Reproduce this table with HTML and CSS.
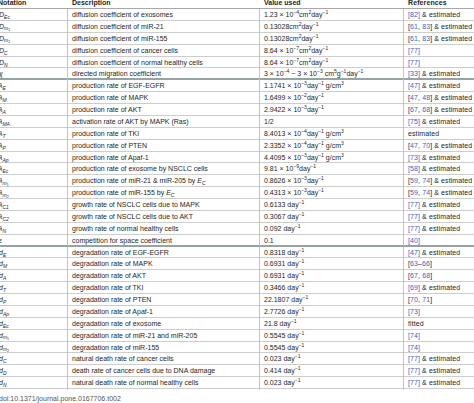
FILE: index.html
```html
<!DOCTYPE html>
<html>
<head>
<meta charset="utf-8">
<link rel="stylesheet" href="styles.css">
</head>
<body>
<div class="tbl">
  <div class="row head"><div class="cell">Notation</div><div class="cell">Description</div><div class="cell">Value used</div><div class="cell">References</div></div>

  <div class="row"><div class="cell n"><i>D</i><sub>Ec</sub></div><div class="cell">diffusion coefficient of exosomes</div><div class="cell">1.23 × 10<sup>−4</sup>cm<sup>2</sup>day<sup>−1</sup></div><div class="cell"><a>[82]</a> &amp; estimated</div></div>
  <div class="row"><div class="cell n"><i>D</i><sub>m<sub>1</sub></sub></div><div class="cell">diffusion coefficient of miR-21</div><div class="cell">0.13028cm<sup>2</sup>day<sup>−1</sup></div><div class="cell">[<a>61</a>, <a>83</a>] &amp; estimated</div></div>
  <div class="row"><div class="cell n"><i>D</i><sub>m<sub>2</sub></sub></div><div class="cell">diffusion coefficient of miR-155</div><div class="cell">0.13028cm<sup>2</sup>day<sup>−1</sup></div><div class="cell">[<a>61</a>, <a>83</a>] &amp; estimated</div></div>
  <div class="row"><div class="cell n"><i>D</i><sub>C</sub></div><div class="cell">diffusion coefficient of cancer cells</div><div class="cell">8.64 × 10<sup>−7</sup>cm<sup>2</sup>day<sup>−1</sup></div><div class="cell"><a>[77]</a></div></div>
  <div class="row"><div class="cell n"><i>D</i><sub>N</sub></div><div class="cell">diffusion coefficient of normal healthy cells</div><div class="cell">8.64 × 10<sup>−7</sup>cm<sup>2</sup>day<sup>−1</sup></div><div class="cell"><a>[77]</a></div></div>
  <div class="row thick"><div class="cell n"><i>χ</i></div><div class="cell">directed migration coefficient</div><div class="cell">3 × 10<sup>−4</sup> − 3 × 10<sup>−3</sup> cm<sup>5</sup>g<sup>−1</sup>day<sup>−1</sup></div><div class="cell"><a>[33]</a> &amp; estimated</div></div>

  <div class="row"><div class="cell n"><i>λ</i><sub>E</sub></div><div class="cell">production rate of EGF-EGFR</div><div class="cell">1.1741 × 10<sup>−3</sup>day<sup>−1</sup> g/cm<sup>3</sup></div><div class="cell"><a>[47]</a> &amp; estimated</div></div>
  <div class="row"><div class="cell n"><i>λ</i><sub>M</sub></div><div class="cell">production rate of MAPK</div><div class="cell">1.6499 × 10<sup>−2</sup>day<sup>−1</sup></div><div class="cell">[<a>47</a>, <a>48</a>] &amp; estimated</div></div>
  <div class="row"><div class="cell n"><i>λ</i><sub>A</sub></div><div class="cell">production rate of AKT</div><div class="cell">2.9422 × 10<sup>−3</sup>day<sup>−1</sup></div><div class="cell">[<a>67</a>, <a>68</a>] &amp; estimated</div></div>
  <div class="row"><div class="cell n"><i>λ</i><sub>MA</sub></div><div class="cell">activation rate of AKT by MAPK (Ras)</div><div class="cell">1/2</div><div class="cell"><a>[75]</a> &amp; estimated</div></div>
  <div class="row"><div class="cell n"><i>λ</i><sub>T</sub></div><div class="cell">production rate of TKI</div><div class="cell">8.4013 × 10<sup>−4</sup>day<sup>−1</sup> g/cm<sup>3</sup></div><div class="cell">estimated</div></div>
  <div class="row"><div class="cell n"><i>λ</i><sub>P</sub></div><div class="cell">production rate of PTEN</div><div class="cell">2.3352 × 10<sup>−4</sup>day<sup>−1</sup> g/cm<sup>3</sup></div><div class="cell">[<a>47</a>, <a>70</a>] &amp; estimated</div></div>
  <div class="row"><div class="cell n"><i>λ</i><sub>Ap</sub></div><div class="cell">production rate of Apaf-1</div><div class="cell">4.4095 × 10<sup>−3</sup>day<sup>−1</sup> g/cm<sup>3</sup></div><div class="cell"><a>[73]</a> &amp; estimated</div></div>
  <div class="row"><div class="cell n"><i>λ</i><sub>Ec</sub></div><div class="cell">production rate of exosome by NSCLC cells</div><div class="cell">9.81 × 10<sup>−9</sup>day<sup>−1</sup></div><div class="cell"><a>[58]</a> &amp; estimated</div></div>
  <div class="row"><div class="cell n"><i>λ</i><sub>m<sub>1</sub></sub></div><div class="cell">production rate of miR-21 &amp; miR-205 by <i>E</i><sub>C</sub></div><div class="cell">0.8626 × 10<sup>−3</sup>day<sup>−1</sup></div><div class="cell">[<a>59</a>, <a>74</a>] &amp; estimated</div></div>
  <div class="row"><div class="cell n"><i>λ</i><sub>m<sub>2</sub></sub></div><div class="cell">production rate of miR-155 by <i>E</i><sub>C</sub></div><div class="cell">0.4313 × 10<sup>−3</sup>day<sup>−1</sup></div><div class="cell">[<a>59</a>, <a>74</a>] &amp; estimated</div></div>
  <div class="row"><div class="cell n"><i>λ</i><sub>C1</sub></div><div class="cell">growth rate of NSCLC cells due to MAPK</div><div class="cell">0.6133 day<sup>−1</sup></div><div class="cell"><a>[77]</a> &amp; estimated</div></div>
  <div class="row"><div class="cell n"><i>λ</i><sub>C2</sub></div><div class="cell">growth rate of NSCLC cells due to AKT</div><div class="cell">0.3067 day<sup>−1</sup></div><div class="cell"><a>[77]</a> &amp; estimated</div></div>
  <div class="row"><div class="cell n"><i>λ</i><sub>N</sub></div><div class="cell">growth rate of normal healthy cells</div><div class="cell">0.092 day<sup>−1</sup></div><div class="cell"><a>[77]</a> &amp; estimated</div></div>
  <div class="row thick"><div class="cell n"><i>ε</i></div><div class="cell">competition for space coefficient</div><div class="cell">0.1</div><div class="cell"><a>[40]</a></div></div>

  <div class="row"><div class="cell n"><i>d</i><sub>E</sub></div><div class="cell">degradation rate of EGF-EGFR</div><div class="cell">0.8318 day<sup>−1</sup></div><div class="cell"><a>[47]</a> &amp; estimated</div></div>
  <div class="row"><div class="cell n"><i>d</i><sub>M</sub></div><div class="cell">degradation rate of MAPK</div><div class="cell">0.6931 day<sup>−1</sup></div><div class="cell">[<a>63</a>–<a>66</a>]</div></div>
  <div class="row"><div class="cell n"><i>d</i><sub>A</sub></div><div class="cell">degradation rate of AKT</div><div class="cell">0.6931 day<sup>−1</sup></div><div class="cell">[<a>67</a>, <a>68</a>]</div></div>
  <div class="row"><div class="cell n"><i>d</i><sub>T</sub></div><div class="cell">degradation rate of TKI</div><div class="cell">0.3466 day<sup>−1</sup></div><div class="cell"><a>[69]</a> &amp; estimated</div></div>
  <div class="row"><div class="cell n"><i>d</i><sub>P</sub></div><div class="cell">degradation rate of PTEN</div><div class="cell">22.1807 day<sup>−1</sup></div><div class="cell">[<a>70</a>, <a>71</a>]</div></div>
  <div class="row"><div class="cell n"><i>d</i><sub>Ap</sub></div><div class="cell">degradation rate of Apaf-1</div><div class="cell">2.7726 day<sup>−1</sup></div><div class="cell"><a>[73]</a></div></div>
  <div class="row"><div class="cell n"><i>d</i><sub>Ec</sub></div><div class="cell">degradation rate of exosome</div><div class="cell">21.8 day<sup>−1</sup></div><div class="cell">fitted</div></div>
  <div class="row"><div class="cell n"><i>d</i><sub>m<sub>1</sub></sub></div><div class="cell">degradation rate of miR-21 and miR-205</div><div class="cell">0.5545 day<sup>−1</sup></div><div class="cell"><a>[74]</a></div></div>
  <div class="row"><div class="cell n"><i>d</i><sub>m<sub>2</sub></sub></div><div class="cell">degradation rate of miR-155</div><div class="cell">0.5545 day<sup>−1</sup></div><div class="cell"><a>[74]</a></div></div>
  <div class="row"><div class="cell n"><i>d</i><sub>C</sub></div><div class="cell">natural death rate of cancer cells</div><div class="cell">0.023 day<sup>−1</sup></div><div class="cell"><a>[77]</a> &amp; estimated</div></div>
  <div class="row"><div class="cell n"><i>d</i><sub>D</sub></div><div class="cell">death rate of cancer cells due to DNA damage</div><div class="cell">0.414 day<sup>−1</sup></div><div class="cell"><a>[77]</a> &amp; estimated</div></div>
  <div class="row"><div class="cell n"><i>d</i><sub>N</sub></div><div class="cell">natural death rate of normal healthy cells</div><div class="cell">0.023 day<sup>−1</sup></div><div class="cell"><a>[77]</a> &amp; estimated</div></div>
</div>
<div class="doi">doi:10.1371/journal.pone.0167706.t002</div>
</body>
</html>
```
FILE: styles.css
```css
html, body {
  margin: 0;
  padding: 0;
  background: #ffffff;
  overflow: hidden;
}
body {
  font-family: "Liberation Sans", Arial, sans-serif;
  font-size: 7px;
  color: #262626;
  width: 474px;
  height: 403px;
}
.tbl {
  margin: -3px 0 0 -6px;
  width: 600px;
}
.row {
  display: grid;
  grid-template-columns: 74px 192px 144px 190px;
  height: 11.875px;
  box-sizing: border-box;
  border-bottom: 1px solid #cdcdcd;
  line-height: 12.6px;
}
.row.head {
  height: 12px;
  line-height: 11px;
  font-weight: bold;
  border-bottom: 1px solid #a8a8a8;
}
.row.head .cell {
  border-right-color: transparent;
}
.row.thick {
  border-bottom: 2px solid #95a3a3;
  line-height: 11.6px;
}
.cell {
  padding: 0 4px;
  white-space: nowrap;
  border-right: 1px solid #c4c4c4;
}
.cell.n {
  padding-left: 5px;
}
.cell:last-child {
  border-right: none;
  letter-spacing: 0.1px;
}
a {
  color: #3a64c6;
}
sup {
  font-size: 5px;
  line-height: 0;
  vertical-align: 2.6px;
}
sub {
  font-size: 5px;
  line-height: 0;
  vertical-align: -1.6px;
  font-style: italic;
}
sub sub {
  font-size: 3.5px;
  vertical-align: -1px;
  font-style: normal;
}
.doi {
  margin: 5px 0 0 -1px;
  line-height: 10px;
  color: #555555;
}
```
